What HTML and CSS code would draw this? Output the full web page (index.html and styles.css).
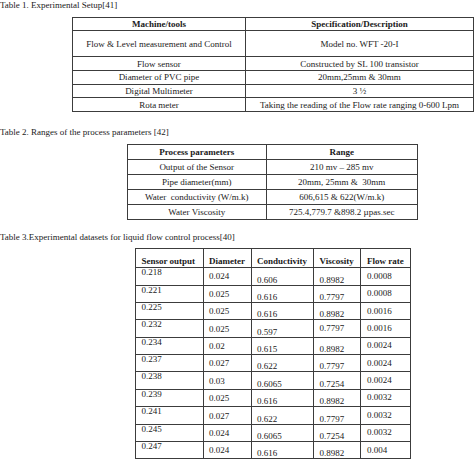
FILE: index.html
```html
<!DOCTYPE html>
<html>
<head>
<meta charset="utf-8">
<link rel="stylesheet" href="styles.css">
</head>
<body>
<p class="caption cap1">Table 1. Experimental Setup[41]</p>
<table class="tbl t1">
  <colgroup><col class="t1c1"><col class="t1c2"></colgroup>
  <tr class="r-h"><th>Machine/tools</th><th>Specification/Description</th></tr>
  <tr class="r-tall"><td>Flow &amp; Level measurement and Control</td><td>Model no. WFT -20-I</td></tr>
  <tr class="r-a"><td>Flow sensor</td><td>Constructed by SL 100 transistor</td></tr>
  <tr class="r-b"><td>Diameter of PVC pipe</td><td>20mm,25mm &amp; 30mm</td></tr>
  <tr class="r-a"><td>Digital Multimeter</td><td>3 ½</td></tr>
  <tr class="r-b"><td>Rota meter</td><td>Taking the reading of the Flow rate ranging 0-600 Lpm</td></tr>
</table>

<p class="caption cap2">Table 2. Ranges of the process parameters [42]</p>
<table class="tbl t2">
  <colgroup><col class="t2c1"><col class="t2c2"></colgroup>
  <tr class="r2h"><th>Process parameters</th><th>Range</th></tr>
  <tr class="r2"><td>Output of the Sensor</td><td>210 mv – 285 mv</td></tr>
  <tr class="r2b"><td>Pipe diameter(mm)</td><td>20mm, 25mm &amp;&nbsp; 30mm</td></tr>
  <tr class="r2"><td>Water&nbsp; conductivity (W/m.k)</td><td>606,615 &amp; 622(W/m.k)</td></tr>
  <tr class="r2"><td>Water Viscosity</td><td>725.4,779.7 &amp;898.2 µpas.sec</td></tr>
</table>

<p class="caption cap3">Table 3.Experimental datasets for liquid flow control process[40]</p>
<table class="tbl t3">
  <colgroup><col class="k1"><col class="k2"><col class="k3"><col class="k4"><col class="k5"></colgroup>
  <tr class="r3h"><th>Sensor output</th><th>Diameter</th><th>Conductivity</th><th>Viscosity</th><th>Flow rate</th></tr>
  <tr><td class="p1">0.218</td><td class="p2">0.024</td><td class="p3">0.606</td><td class="p3">0.8982</td><td class="p5">0.0008</td></tr>
  <tr><td class="p1">0.221</td><td class="p2">0.025</td><td class="p3">0.616</td><td class="p3">0.7797</td><td class="p5">0.0008</td></tr>
  <tr><td class="p1">0.225</td><td class="p2">0.025</td><td class="p3">0.616</td><td class="p3">0.8982</td><td class="p5">0.0016</td></tr>
  <tr><td class="p1">0.232</td><td class="p2">0.025</td><td class="p3">0.597</td><td class="p5">0.7797</td><td class="p5">0.0016</td></tr>
  <tr><td class="p1">0.234</td><td class="p2">0.02</td><td class="p3">0.615</td><td class="p3">0.8982</td><td class="p5">0.0024</td></tr>
  <tr><td class="p1">0.237</td><td class="p2">0.027</td><td class="p3">0.622</td><td class="p3">0.7797</td><td class="p5">0.0024</td></tr>
  <tr><td class="p1">0.238</td><td class="p2">0.03</td><td class="p3">0.6065</td><td class="p3">0.7254</td><td class="p5">0.0024</td></tr>
  <tr><td class="p1">0.239</td><td class="p2">0.025</td><td class="p3">0.616</td><td class="p3">0.8982</td><td class="p5">0.0032</td></tr>
  <tr><td class="p1">0.241</td><td class="p2">0.027</td><td class="p3">0.622</td><td class="p3">0.7797</td><td class="p5">0.0032</td></tr>
  <tr><td class="p1">0.245</td><td class="p2">0.024</td><td class="p3">0.6065</td><td class="p3">0.7254</td><td class="p5">0.0032</td></tr>
  <tr><td class="p1">0.247</td><td class="p2">0.024</td><td class="p3">0.616</td><td class="p3">0.8982</td><td class="p5">0.004</td></tr>
</table>
</body>
</html>
```

FILE: styles.css
```css
html, body {
  margin: 0;
  padding: 0;
  background: #ffffff;
}
body {
  font-family: "Liberation Serif", "Times New Roman", serif;
  font-size: 9px;
  color: #1a1a1a;
}
.caption {
  margin: 0;
  line-height: 10px;
  white-space: nowrap;
}
.cap2 { margin-top: 15px; }
.cap3 { margin-top: 12px; }

.tbl {
  border-collapse: collapse;
  table-layout: fixed;
  line-height: 10px;
}
.tbl th, .tbl td {
  border: 1px solid #3c3c3c;
  padding: 0 2px;
  white-space: nowrap;
  overflow: hidden;
}
.tbl th { font-weight: bold; }

/* Table 1 */
.t1 {
  margin: 7px 0 0 72px;
  width: 401px;
  text-align: center;
}
.t1c1 { width: 173px; }
.t1c2 { width: 228px; }
.t1 th, .t1 td { vertical-align: middle; text-align: center; }
.r-h { height: 12.7px; }
.r-tall { height: 26.7px; }
.r-a { height: 13.3px; }
.r-b { height: 14.2px; }

/* Table 2 */
.t2 {
  margin: 7px 0 0 127px;
  width: 290px;
}
.t2c1 { width: 138.5px; }
.t2c2 { width: 151.5px; }
.t2 th, .t2 td { vertical-align: middle; text-align: center; }
.r2h { height: 14.3px; }
.r2 { height: 15px; }
.r2b { height: 15.5px; }

/* Table 3 */
.t3 {
  margin: 6px 0 0 135px;
  width: 275px;
}
.k1 { width: 67.5px; }
.k2 { width: 48px; }
.k3 { width: 62.6px; }
.k4 { width: 47.4px; }
.k5 { width: 49.5px; }
.t3 th, .t3 td {
  text-align: left;
  padding-left: 5.5px;
  line-height: 9px;
}
.t3 th {
  vertical-align: bottom;
  padding-bottom: 1px;
  height: 17px;
}
.t3 td {
  vertical-align: top;
  height: 16.4px;
  box-sizing: border-box;
}
.t3 td.p1 { padding-top: 0; }
.t3 td.p2 { padding-top: 4.3px; }
.t3 td.p3 { padding-top: 7.4px; }
.t3 td.p5 { padding-top: 3.6px; }
```
